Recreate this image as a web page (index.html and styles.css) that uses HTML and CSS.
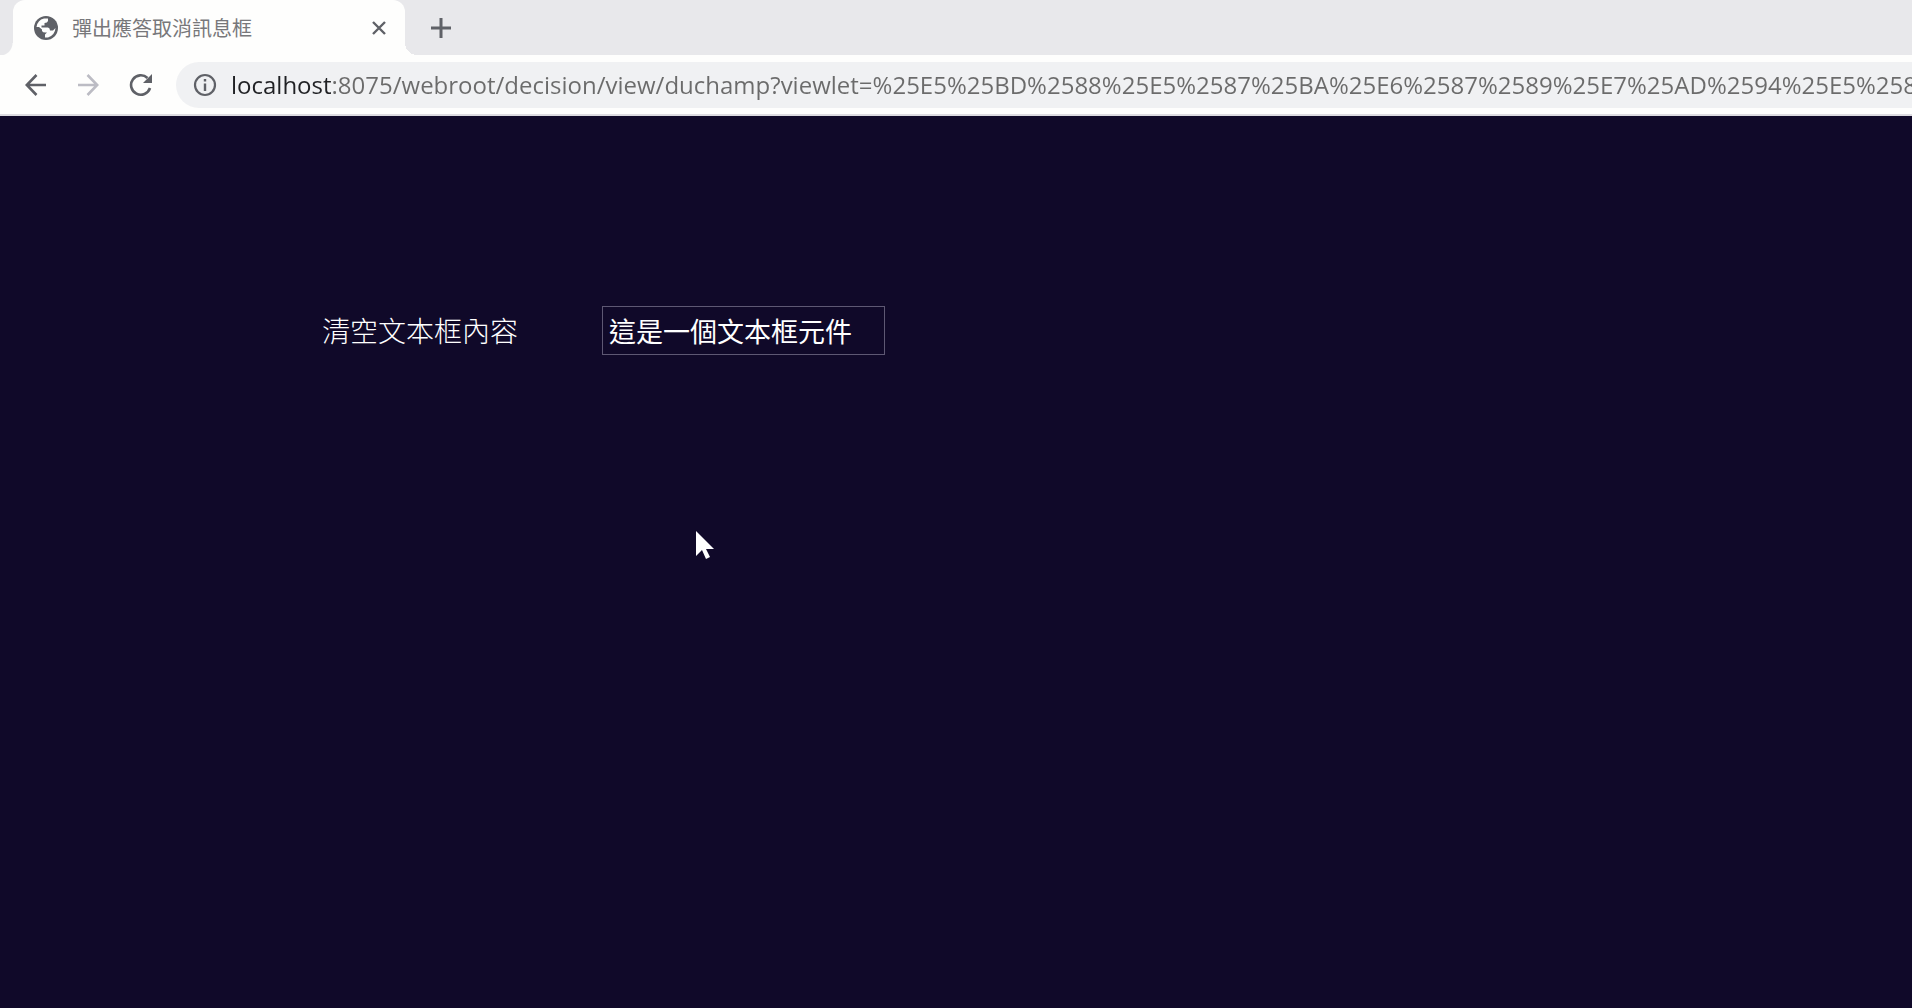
FILE: index.html
```html
<!DOCTYPE html>
<html lang="zh-Hant">
<head>
  <meta charset="utf-8">
  <title>彈出應答取消訊息框</title>
  <link rel="stylesheet" href="styles.css">
</head>
<body>
  <header class="browser">
    <div class="tab-strip">
      <div class="prev-tab"></div>
      <div class="tab">
        <svg class="globe" viewBox="0 0 24 24">
          <circle cx="12" cy="12" r="12" fill="#5f6167"/>
          <path d="M2.5 11 Q3.5 4 10 2.5 L14 2.5 L14 5 Q13.5 7 10.5 7 L10.5 9.5 L7.5 9.5 L7.5 11.5 L14 11.5 Q16 12 16 14.5 L19 14.5 L21.5 12 Q21 19 14 21.5 L11 21.5 L11 18.5 L13 16.5 Q9 17 8 15 L8 13.5 L5 11 Z" fill="#fefefd"/>
        </svg>
        <span class="tab-title">彈出應答取消訊息框</span>
        <button class="icon-btn close-btn" aria-label="Close tab">
          <svg width="14" height="14" viewBox="0 0 14 14">
            <path d="M1 1 L13 13 M13 1 L1 13" stroke="#5f6167" stroke-width="2.4"/>
          </svg>
        </button>
      </div>
      <button class="icon-btn new-tab" aria-label="New tab">
        <svg width="20" height="20" viewBox="0 0 20 20">
          <path d="M10 0 V20 M0 10 H20" stroke="#5f6167" stroke-width="3"/>
        </svg>
      </button>
    </div>
    <div class="toolbar">
      <nav class="nav-buttons">
        <button class="icon-btn" aria-label="Back">
          <svg width="22" height="22" viewBox="0 0 22 22" fill="none" stroke="#5f6167" stroke-width="2.6">
            <path d="M21 11 H2 M11.5 1 L1.8 11 L11.5 21"/>
          </svg>
        </button>
        <button class="icon-btn" aria-label="Forward">
          <svg width="22" height="22" viewBox="0 0 22 22" fill="none" stroke="#bcbcc4" stroke-width="2.6">
            <path d="M1 11 H20 M10.5 1 L20.2 11 L10.5 21"/>
          </svg>
        </button>
        <button class="icon-btn" aria-label="Reload">
          <svg width="24" height="24" viewBox="0 0 24 24">
            <path d="M22 15 A9.7 9.7 0 1 1 19.5 5" fill="none" stroke="#5f6167" stroke-width="2.6"/>
            <path d="M24 1 V10 H15 Z" fill="#5f6167"/>
          </svg>
        </button>
      </nav>
      <div class="address-bar">
        <svg class="info" width="24" height="24" viewBox="0 0 24 24">
          <circle cx="12" cy="12" r="10" fill="none" stroke="#5f6167" stroke-width="2.2"/>
          <path d="M12 10.5 V18 M12 6 V8.6" stroke="#5f6167" stroke-width="2.4"/>
        </svg>
        <input class="url" type="text" aria-label="Address" value="localhost:8075/webroot/decision/view/duchamp?viewlet=%25E5%25BD%2588%25E5%2587%25BA%25E6%2587%2589%25E7%25AD%2594%25E5%258F">
      </div>
    </div>
  </header>
  <main class="page">
    <div class="field-row">
      <label class="field-label" for="text-widget">清空文本框內容</label>
      <input class="text-widget" id="text-widget" type="text" value="這是一個文本框元件">
    </div>
    <svg class="cursor" width="20" height="30" viewBox="0 0 20 30">
      <path d="M1 1 V26 L7 20 L11 29 L15 27 L11 19 H19 Z" fill="#fff"/>
    </svg>
  </main>
</body>
</html>
```
FILE: styles.css
```css
* {
  box-sizing: border-box;
}

body {
  margin: 0;
  min-height: 100vh;
  display: flex;
  flex-direction: column;
  font-family: "Open Sans", "Noto Sans CJK TC", sans-serif;
  background-color: #100929;
}

.browser {
  background-color: #fefefd;
  border-bottom: 2px solid #dddce1;
}

.tab-strip {
  display: flex;
  height: 55px;
  background-color: #e8e8eb;
}

/* curved foot at the left of the active tab */
.prev-tab {
  width: 13px;
  background: radial-gradient(circle at 0 0, #e8e8eb 12px, #fefefd 13px) 0 43px / 13px 12px no-repeat;
}

.tab {
  position: relative;
  display: flex;
  align-items: center;
  width: 392px;
  padding: 0 16px 0 21px;
  border-radius: 12px 12px 0 0;
  background-color: #fefefd;
}

/* curved foot at the right of the active tab */
.tab::after {
  content: "";
  position: absolute;
  left: 100%;
  bottom: 0;
  width: 12px;
  height: 12px;
  background: radial-gradient(circle at 100% 0, #e8e8eb 12px, #fefefd 12px);
}

.globe {
  width: 24px;
  height: 24px;
}

.tab-title {
  flex: 1;
  margin-left: 14px;
  padding-top: 2px;
  font-size: 20px;
  line-height: 28px;
  color: #77777a;
  white-space: nowrap;
}

.icon-btn {
  display: flex;
  align-items: center;
  justify-content: center;
  width: 24px;
  height: 24px;
  padding: 0;
  border: none;
  background: none;
}

.close-btn {
  width: 20px;
}

.new-tab {
  align-self: center;
  margin-left: 24px;
}

.toolbar {
  display: flex;
  align-items: center;
  gap: 24px;
  padding: 7px 0 6px 24px;
}

.nav-buttons {
  display: flex;
  gap: 28px;
}

.address-bar {
  flex: 1;
  display: flex;
  align-items: center;
  gap: 14px;
  height: 46px;
  padding-left: 17px;
  border-radius: 23px 0 0 23px;
  background-color: #f0f1f3;
}

.info {
  flex: none;
}

/* the host name is darker than the rest of the address */
.url {
  flex: 1;
  min-width: 0;
  padding: 0;
  border: none;
  font-family: "Open Sans", sans-serif;
  font-size: 24px;
  line-height: 32px;
  color: transparent;
  background-image: linear-gradient(to right, #202124 100px, #6b6b6b 100px);
  background-clip: text;
  -webkit-background-clip: text;
}

.page {
  position: relative;
  flex: 1;
  padding: 190px 0 0 322px;
}

.field-row {
  display: flex;
  align-items: center;
  gap: 84px;
}

.field-label {
  font-size: 28px;
  font-weight: 300;
  line-height: 40px;
  color: #fff;
}

.text-widget {
  width: 283px;
  height: 49px;
  padding: 0 6px;
  border: 1px solid #5e5873;
  font-family: "Open Sans", "Noto Sans CJK TC", sans-serif;
  font-size: 27px;
  color: #fff;
  background-color: transparent;
}

.cursor {
  position: absolute;
  left: 695px;
  top: 414px;
}
```
